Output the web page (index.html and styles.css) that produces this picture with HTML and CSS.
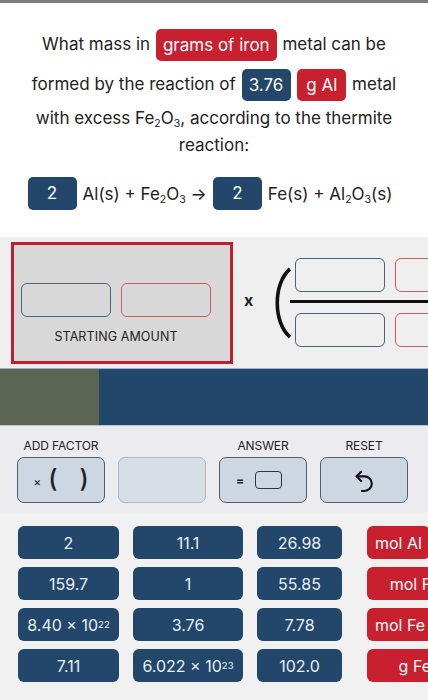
FILE: index.html
```html
<!DOCTYPE html>
<html>
<head>
<meta charset="utf-8">
<link rel="stylesheet" href="styles.css">
</head>
<body>
<div class="page">
  <div class="topbar"></div>
  <section class="question">
    <p class="q-text">What mass in <span class="pill red">grams of iron</span> metal can be formed by the reaction of <span class="pill blue">3.76</span> <span class="pill red">g Al</span> metal with excess Fe<sub>2</sub>O<sub>3</sub>, according to the thermite reaction:</p>
    <div class="equation"><span class="pill blue coef">2</span><span class="eq-text">Al(s) + Fe<sub>2</sub>O<sub>3</sub> →</span><span class="pill blue coef">2</span><span class="eq-text">Fe(s) + Al<sub>2</sub>O<sub>3</sub>(s)</span></div>
  </section>

  <section class="workspace">
    <div class="start-box">
      <div class="start-inner">
        <div class="slot-row">
          <div class="slot slot-blue"></div>
          <div class="slot slot-red"></div>
        </div>
        <div class="start-label">STARTING AMOUNT</div>
      </div>
    </div>
    <div class="times">x</div>
    <svg class="paren" width="18" height="72" viewBox="0 0 18 72"><path d="M16 2 C-1 16 -1 56 16 70" fill="none" stroke="#111" stroke-width="3.6"/></svg>
    <div class="fraction">
      <div class="slot-row">
        <div class="slot slot-blue"></div>
        <div class="slot slot-red"></div>
      </div>
      <div class="frac-line"></div>
      <div class="slot-row">
        <div class="slot slot-blue"></div>
        <div class="slot slot-red"></div>
      </div>
    </div>
  </section>

  <div class="band">
    <div class="band-olive"></div>
    <div class="band-blue"></div>
  </div>

  <section class="controls">
    <div class="ctrl">
      <div class="ctrl-label">ADD FACTOR</div>
      <div class="ctrl-btn">
        <span class="mini-x">×</span><span class="big-paren">(</span><span class="paren-gap"></span><span class="big-paren">)</span>
      </div>
    </div>
    <div class="ctrl">
      <div class="ctrl-label">&nbsp;</div>
      <div class="ctrl-btn ctrl-btn-faded"></div>
    </div>
    <div class="ctrl">
      <div class="ctrl-label">ANSWER</div>
      <div class="ctrl-btn">
        <span class="mini-eq">=</span><span class="ans-box"></span>
      </div>
    </div>
    <div class="ctrl">
      <div class="ctrl-label">RESET</div>
      <div class="ctrl-btn">
        <svg class="reset-icon" width="25" height="25" viewBox="0 0 24 24"><path d="M4.5 8h7.5a7 7 0 0 1 0 14h-2.5" fill="none" stroke="#111" stroke-width="2" stroke-linecap="round"/><path d="M8.8 3.6L4.4 8l4.4 4.4" fill="none" stroke="#111" stroke-width="2" stroke-linecap="round" stroke-linejoin="round"/></svg>
      </div>
    </div>
  </section>

  <section class="keypad">
    <div class="grid">
      <div class="key">2</div>
      <div class="key">11.1</div>
      <div class="key">26.98</div>
      <div class="key unit">mol Al</div>

      <div class="key">159.7</div>
      <div class="key">1</div>
      <div class="key">55.85</div>
      <div class="key unit long">mol Fe<sub>2</sub>O<sub>3</sub></div>

      <div class="key">8.40 × 10<sup>22</sup></div>
      <div class="key">3.76</div>
      <div class="key">7.78</div>
      <div class="key unit">mol Fe</div>

      <div class="key">7.11</div>
      <div class="key">6.022 × 10<sup>23</sup></div>
      <div class="key">102.0</div>
      <div class="key unit long">g Fe<sub>2</sub>O<sub>3</sub></div>
    </div>
  </section>
</div>
</body>
</html>
```

FILE: styles.css
```css
* { box-sizing: border-box; }

html, body {
  margin: 0;
  padding: 0;
  background: #ffffff;
}

body {
  font-family: "Inter", "Liberation Sans", sans-serif;
  color: #222;
  width: 428px;
  height: 700px;
  overflow: hidden;
}

.page {
  width: 428px;
  overflow: hidden;
}

.topbar {
  height: 3px;
  background: #7c7c7c;
}

.question {
  padding: 22px 18px 0;
  background: #fff;
  height: 234px;
}

.q-text {
  margin: 0;
  text-align: center;
  font-size: 17px;
  line-height: 27px;
  color: #222;
}

.q-text sub, .eq-text sub, .key sub {
  font-size: 0.62em;
  vertical-align: -0.25em;
  line-height: 0;
}

.pill {
  display: inline-block;
  height: 32px;
  line-height: 32px;
  min-width: 49px;
  padding: 0 7px;
  margin: 4px 1px;
  border-radius: 5px;
  color: #fff;
  text-align: center;
  vertical-align: middle;
}

.pill.red { background: #c8202f; }
.pill.blue { background: #22476b; }

.equation {
  display: flex;
  align-items: center;
  justify-content: center;
  margin-top: 18px;
  font-size: 17px;
  gap: 4px;
  padding-right: 6px;
}

.pill.coef {
  margin: 0;
  height: 33px;
  line-height: 33px;
}

.eq-text {
  padding: 0 2px;
}

.workspace {
  display: flex;
  align-items: center;
  height: 131px;
  background: #efefef;
  overflow: hidden;
}

.start-box {
  flex: none;
  width: 222px;
  height: 122px;
  margin-left: 11px;
  border: 3px solid #c0202e;
  background: #d8d8d8;
  padding: 38px 0 0 7px;
}

.start-inner {
  width: 190px;
  display: flex;
  flex-direction: column;
  align-items: center;
}

.slot-row {
  display: flex;
  gap: 10px;
}

.slot {
  flex: none;
  width: 90px;
  height: 34px;
  border-radius: 6px;
}

.slot-blue { border: 1.5px solid #4a6282; }
.slot-red { border: 1.5px solid #d05a64; }

.start-label {
  margin-top: 12px;
  font-size: 12.5px;
  letter-spacing: 0.1px;
  color: #222;
}

.times {
  flex: none;
  margin-left: 11px;
  font-size: 16px;
  font-weight: 700;
  color: #222;
  line-height: 1;
  margin-top: -6px;
}

.paren {
  flex: none;
  margin-left: 21px;
}

.fraction {
  flex: none;
  width: 200px;
  margin-left: -2px;
}

.fraction .slot-row {
  padding-left: 5px;
}

.frac-line {
  height: 3px;
  background: #111;
  margin: 8px 0 10px;
}

.band {
  display: flex;
  height: 58px;
  border-top: 1px solid #9db2c9;
  border-bottom: 1px solid #b8c6d6;
}

.band-olive {
  width: 99px;
  background: #5c6552;
}

.band-blue {
  flex: 1;
  background: #23476a;
}

.controls {
  display: flex;
  gap: 13px;
  padding: 13px 0 10px 17px;
  background: #ebebf0;
}

.ctrl {
  width: 88px;
  display: flex;
  flex-direction: column;
  align-items: center;
}

.ctrl-label {
  font-size: 12px;
  line-height: 14px;
  height: 14px;
  color: #222;
  margin-bottom: 4px;
  letter-spacing: -0.1px;
}

.ctrl-btn {
  width: 88px;
  height: 46px;
  border: 1.5px solid #4f5f70;
  border-radius: 7px;
  background: #cdd7e1;
  display: flex;
  align-items: center;
  justify-content: center;
}

.ctrl-btn-faded {
  border-color: #aeb8c3;
  background: #d7dee5;
}

.mini-x {
  font-size: 12px;
  margin-right: 7px;
  margin-top: 2px;
}

.big-paren {
  font-size: 25px;
  font-weight: 500;
  line-height: 1;
  margin-top: -3px;
}

.paren-gap {
  width: 22px;
}

.mini-eq {
  font-size: 12px;
  font-weight: 700;
  margin-right: 11px;
  margin-left: -8px;
}

.ans-box {
  width: 27px;
  height: 18px;
  border: 1.6px solid #333;
  border-radius: 4px;
}

.reset-icon {
  display: block;
}

.keypad {
  background: #f1f1f1;
  height: 188px;
  padding: 13px 0 0 18px;
  overflow: hidden;
}

.grid {
  display: grid;
  grid-template-columns: 101px 110px 85px 130px;
  grid-auto-rows: 33px;
  column-gap: 14px;
  row-gap: 8px;
  width: max-content;
}

.key {
  background: #22476b;
  color: #e8eef5;
  border-radius: 6px;
  font-size: 16px;
  display: flex;
  align-items: center;
  justify-content: center;
  white-space: nowrap;
}

.key sup {
  font-size: 0.6em;
  vertical-align: 0.6em;
  line-height: 0;
}

.key.unit {
  background: #c8202f;
  color: #fff;
  margin-left: 11px;
  justify-self: start;
  padding: 0 8px;
}

.key.unit.long {
  width: 120px;
  padding: 0;
}
```
